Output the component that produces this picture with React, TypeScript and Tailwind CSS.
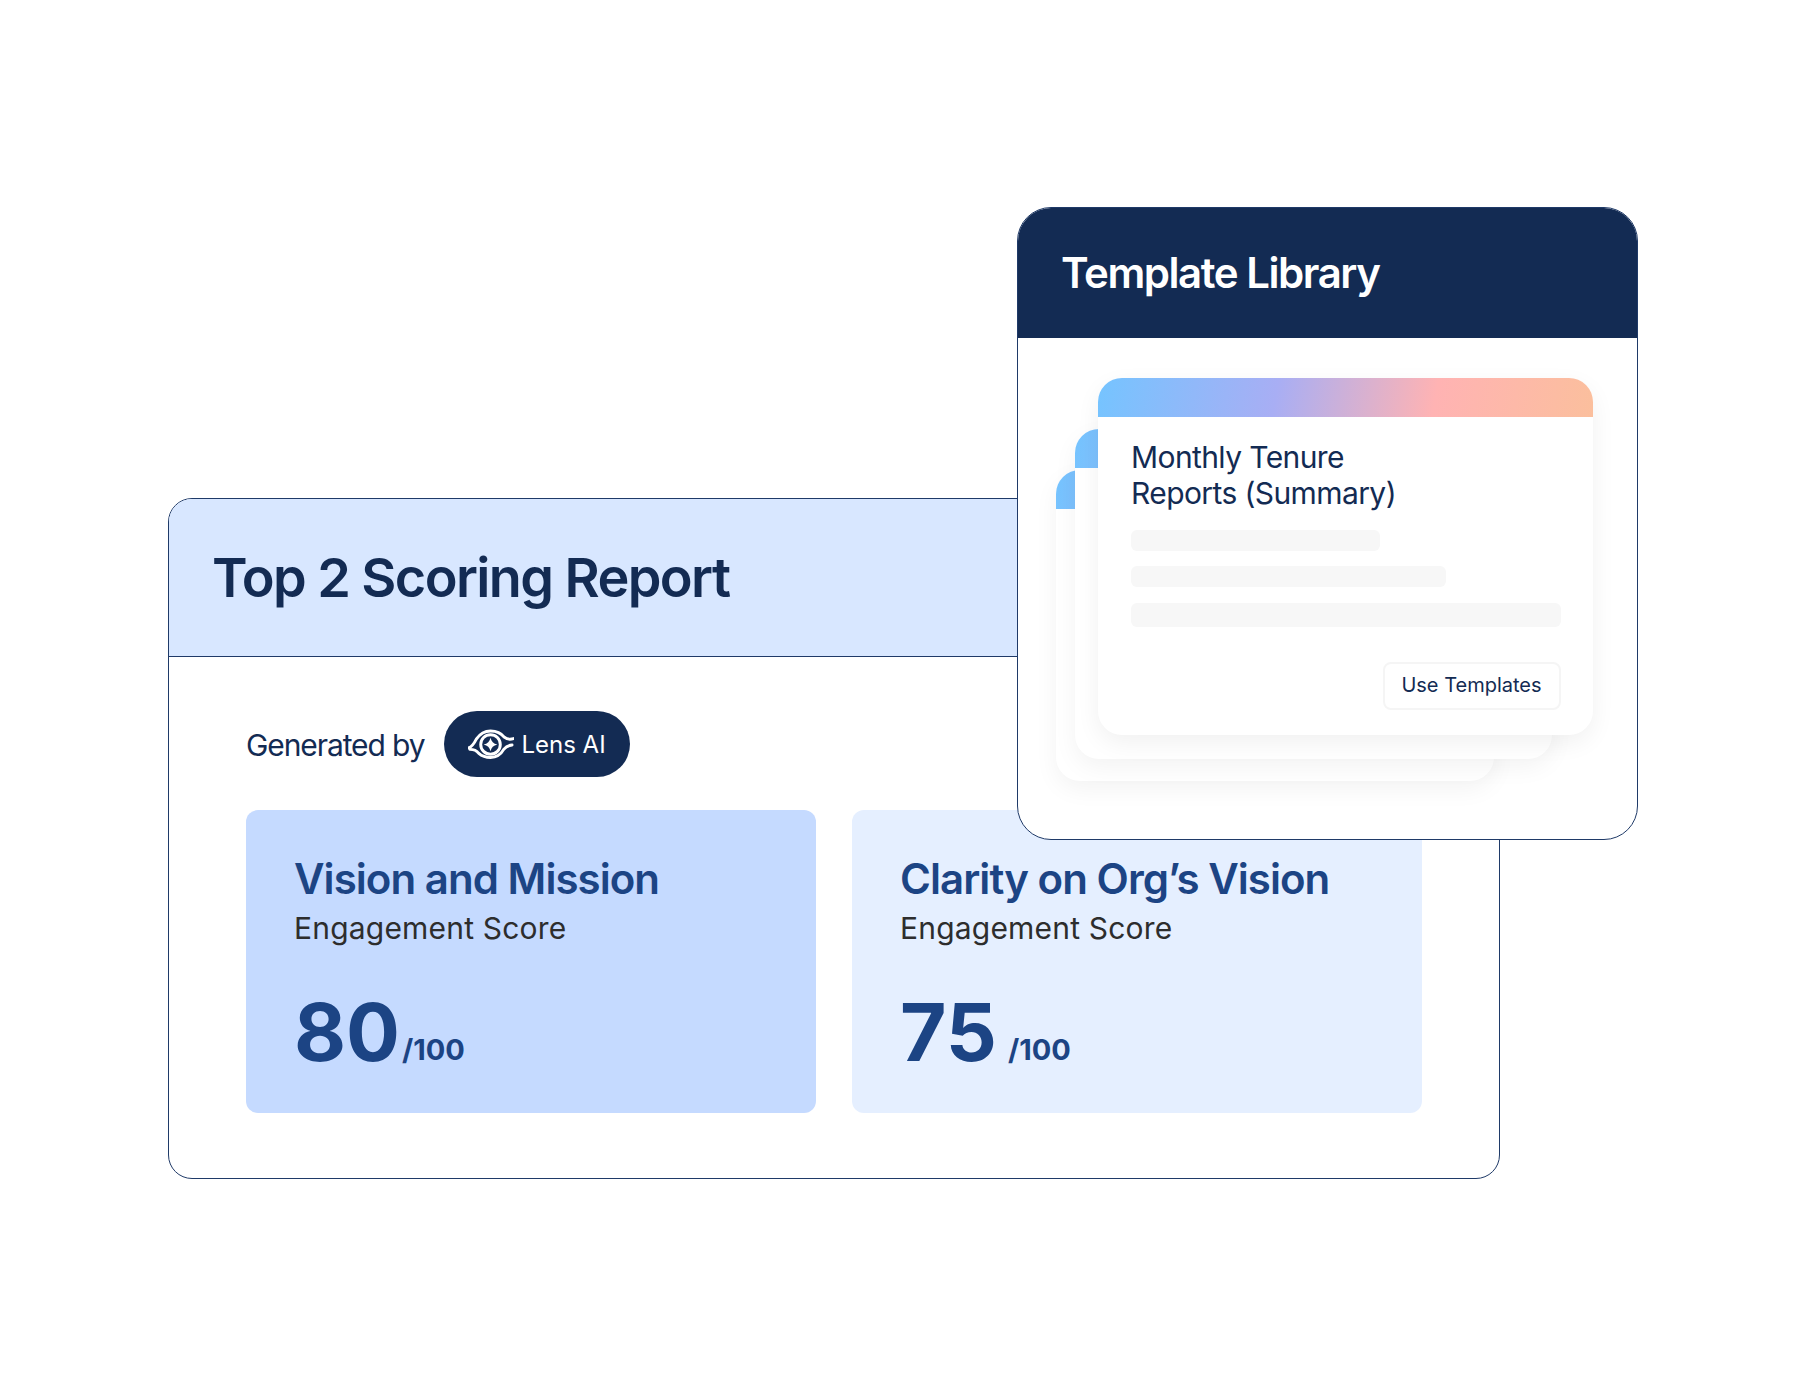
import React from "react";

const LensEye = () => (
  <svg width="46" height="30" viewBox="0 0 47 30" fill="none" className="shrink-0">
    {/* верхнее веко */}
    <path d="M0.5 19 C4 18 6 15 8.5 10 C13 3.5 17 1.7 23 1.7 C29 1.7 34 4 37 8 C40 10.5 43 10.5 46.5 9.5" stroke="#fff" strokeWidth="3" strokeLinecap="round" />
    {/* нижнее веко */}
    <path d="M2 20.5 C6 20.5 9 22 11 24.5 C15 28 19 28.7 23 28.7 C29 28.7 34 25 36.5 20.5 C38.5 18 41 16.5 45 16" stroke="#fff" strokeWidth="3" strokeLinecap="round" />
    <circle cx="23" cy="15.5" r="10" stroke="#fff" strokeWidth="3" />
    <path d="M23 8.5 C23.9 12.5 26 14.6 30 15.5 C26 16.4 23.9 18.5 23 22.5 C22.1 18.5 20 16.4 16 15.5 C20 14.6 22.1 12.5 23 8.5 Z" fill="#fff" />
  </svg>
);

const ScoreCard = ({
  title,
  score,
  bg,
  gap,
}: {
  title: string;
  score: string;
  bg: string;
  gap: string;
}) => (
  <div className={`h-[303px] w-[570px] rounded-[12px] pl-[48px] pt-[44px] ${bg}`}>
    <div className="text-[42px] leading-[50px] font-semibold tracking-[-0.95px] text-[#1c4484]">{title}</div>
    <div className="mt-[4px] text-[30px] leading-[40px] tracking-[0.2px] text-[#2d2d2d]">Engagement Score</div>
    <div className={`mt-[34px] flex items-baseline text-[#1c4484] ${gap}`}>
      <span className="text-[80px] leading-[100px] font-bold">{score}</span>
      <span className="-translate-y-px text-[29px] font-bold">/100</span>
    </div>
  </div>
);

const StackCard = ({ className }: { className: string }) => (
  <div className={`absolute rounded-[24px] bg-white shadow-[0_8px_24px_rgba(0,0,0,0.05)] ${className}`}>
    <div className="h-[39px] rounded-t-[24px] bg-[linear-gradient(100deg,#75c4ff_0%,#a8aef4_36%,#ffb3b3_68%,#fbbf9d_100%)]"></div>
  </div>
);

const TemplateLibrary = () => (
  <div className="absolute left-[1017px] top-[207px] h-[633px] w-[621px] overflow-hidden rounded-[34px] border border-[#1f3a68] bg-white">
    <div className="flex h-[131px] items-center bg-[#132b53] pl-[44px] -mx-px -mt-px">
      <span className="text-[42px] font-semibold tracking-[-1.45px] text-white">Template Library</span>
    </div>

    <StackCard className="left-[38px] top-[262px] h-[311px] w-[438px]" />
    <StackCard className="left-[57px] top-[221px] h-[330px] w-[477px]" />

    {/* Передняя карточка */}
    <div className="absolute left-[80px] top-[170px] h-[357px] w-[495px] rounded-[24px] bg-white shadow-[0_8px_24px_rgba(0,0,0,0.06)]">
      <div className="h-[39px] rounded-t-[24px] bg-[linear-gradient(100deg,#75c4ff_0%,#a8aef4_36%,#ffb3b3_68%,#fbbf9d_100%)]"></div>
      <div className="pl-[33px] pr-[32px] pt-[22px]">
        <div className="text-[30px] leading-[36px] tracking-[-0.6px] text-[#132b53]">
          Monthly Tenure
          <br />
          Reports (Summary)
        </div>
        <div className="mt-[19px] h-[21px] w-[249px] rounded-[6px] bg-[#f7f7f7]"></div>
        <div className="mt-[15px] h-[21px] w-[315px] rounded-[6px] bg-[#f7f7f7]"></div>
        <div className="mt-[16px] h-[24px] w-[430px] rounded-[6px] bg-[#f7f7f7]"></div>
        <div className="mt-[35px] flex justify-end">
          <div className="flex h-[48px] w-[178px] items-center justify-center rounded-[8px] border-2 border-[#f5f5f5] pb-[2px] pr-[1px] text-[20px] text-[#132b53]">
            Use Templates
          </div>
        </div>
      </div>
    </div>
  </div>
);

export default function App() {
  return (
    <div className="relative h-[1386px] w-full overflow-hidden bg-white pl-[168px] pt-[498px] font-['Inter',sans-serif]">
      <div className="h-[681px] w-[1332px] overflow-hidden rounded-[24px] border border-[#1f3a68] bg-white">
        <div className="flex h-[158px] items-center border-b border-[#1f3a68] bg-[#d8e7ff] pl-[43px]">
          <h1 className="text-[54px] font-semibold tracking-[-1.6px] text-[#132b53]">Top 2 Scoring Report</h1>
        </div>

        <div className="pl-[77px]">
          <div className="mt-[54px] flex items-center gap-[19px]">
            <span className="pt-[2px] text-[30px] tracking-[-1.1px] text-[#132b53]">Generated by</span>
            <div className="flex h-[66px] w-[186px] items-center justify-center gap-[7px] rounded-full bg-[#132b53] pl-[1px]">
              <LensEye />
              <span className="pt-[1px] text-[24px] text-white">Lens AI</span>
            </div>
          </div>

          <div className="mt-[33px] flex gap-[36px]">
            <ScoreCard title="Vision and Mission" score="80" bg="bg-[#c5daff]" gap="gap-[2px]" />
            <ScoreCard title="Clarity on Org’s Vision" score="75" bg="bg-[#e5efff]" gap="gap-[11px]" />
          </div>
        </div>
      </div>

      <TemplateLibrary />
    </div>
  );
}
